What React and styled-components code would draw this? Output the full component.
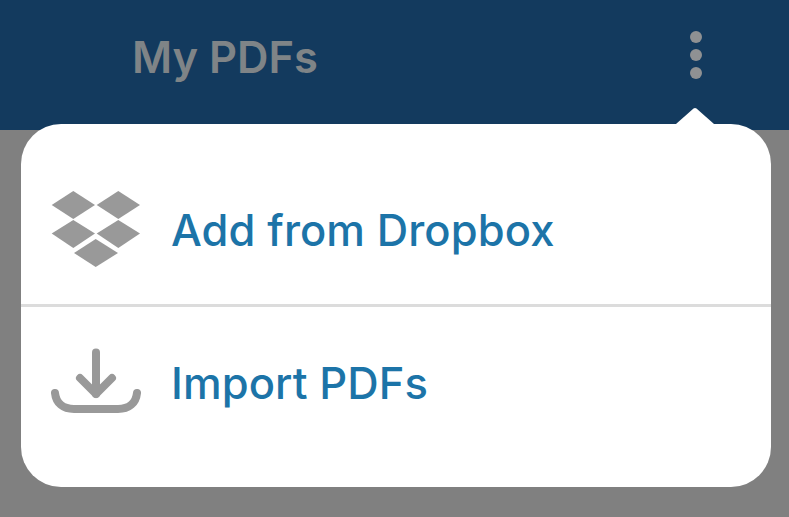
import React from "react";
import styled, { createGlobalStyle } from "styled-components";

const Global = createGlobalStyle`
  html, body { margin: 0; padding: 0; }
  body { width: 789px; height: 517px; overflow: hidden; background: #808080; font-family: "Inter", "Liberation Sans", sans-serif; }
`;
const Page = styled.div`
  position: relative;
  width: 789px;
  height: 517px;
  background: #808080;
`;
const Header = styled.header`
  display: flex;
  align-items: center;
  justify-content: space-between;
  box-sizing: border-box;
  height: 130px;
  padding: 0 87px 0 132px;
  background: #133a5e;
`;
const Title = styled.h1`
  margin: 0 0 17px;
  font-size: 43.5px;
  line-height: 50px;
  font-weight: 600;
  color: #7f8487;
`;
const MoreButton = styled.div`
  display: flex;
  flex-direction: column;
  gap: 6px;
  margin-bottom: 21px;
`;
const Dot = styled.span`
  width: 12px;
  height: 12px;
  border-radius: 50%;
  background: #8f9193;
`;
const Popover = styled.div`
  position: absolute;
  left: 21px;
  top: 124px;
  box-sizing: border-box;
  width: 750px;
  height: 363px;
  padding: 30px 0 31px;
  display: flex;
  flex-direction: column;
  border-radius: 40px;
  background: #fff;
`;
const Arrow = styled.svg`
  position: absolute;
  left: 654px;
  top: -17px;
  width: 40px;
  height: 18px;
`;
const Row = styled.div`
  flex: 1;
  display: flex;
  align-items: center;
  gap: 30px;
  padding-left: 30px;
  & + & { border-top: 3px solid #dcdcdc; }
`;
const IconBox = styled.svg`
  flex: none;
  width: 90px;
  height: 76px;
`;
const Label = styled.span`
  margin-top: 3px;
  font-size: 43.5px;
  line-height: 50px;
  font-weight: 500;
  letter-spacing: 0.1px;
  color: #1c74a8;
  white-space: nowrap;
`;

export default function App() {
  return (
    <Page>
      <Global />
      <Header>
        <Title>My PDFs</Title>
        <MoreButton><Dot /><Dot /><Dot /></MoreButton>
      </Header>
      <Popover>
        <Arrow viewBox="0 0 40 18">
          <path d="M1 17 L18.5 1.5 Q20 0.5 21.5 1.5 L39 17 V18 H1 Z" fill="#fff" />
        </Arrow>
        <Row>
          <IconBox viewBox="51 191 90 76">
            <g fill="#999">
              <path d="M51.7 205 73.3 191 95 205 73.3 219Z" />
              <path d="M96.7 205 118.3 191 140 205 118.3 219Z" />
              <path d="M51.7 233.5 73.3 220 95 233.5 73.3 248Z" />
              <path d="M96.7 233.5 118.3 220 140 233.5 118.3 248Z" />
              <path d="M74 253 95.7 239 118 253 95.7 267Z" />
            </g>
          </IconBox>
          <Label>Add from Dropbox</Label>
        </Row>
        <Row>
          <IconBox viewBox="51 342 90 76">
            <g fill="none" stroke="#999" strokeWidth="8" strokeLinecap="round" strokeLinejoin="round">
              <path d="M96 351.5V393" />
              <path d="M80 377 96 393 112 377" />
              <path d="M55 392C56 402 63 408 74 408H118C129 408 136 402 137 392" />
            </g>
          </IconBox>
          <Label>Import PDFs</Label>
        </Row>
      </Popover>
    </Page>
  );
}
